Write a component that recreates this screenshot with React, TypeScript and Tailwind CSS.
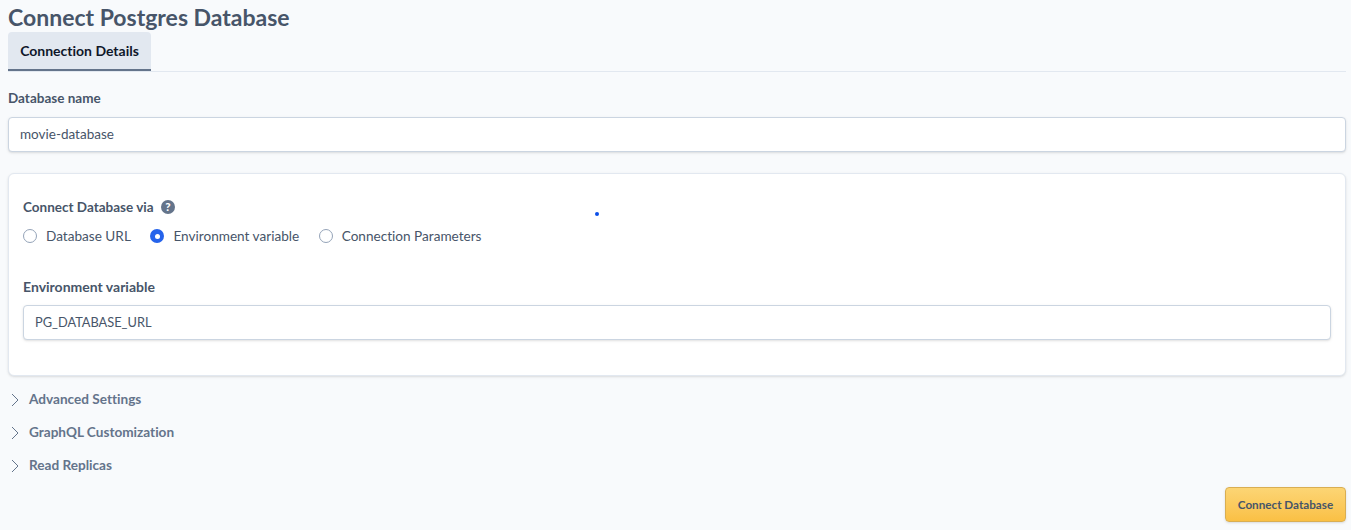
const FONT = "font-['Lato',sans-serif] [font-variant-ligatures:none]";

function Chevron() {
  return (
    <svg width="8" height="14" viewBox="0 0 8 14" fill="none" stroke="#64748b" strokeWidth="1" className="shrink-0">
      <path d="M1 1l6 6-6 6" />
    </svg>
  );
}

function Radio({ label, checked }: { label: string; checked?: boolean }) {
  return (
    <label className="flex items-center gap-[9px]">
      {checked ? (
        <span className="flex h-[14px] w-[14px] items-center justify-center rounded-full bg-[#2563eb]">
          <span className="h-[5px] w-[5px] rounded-full bg-white" />
        </span>
      ) : (
        <span className="h-[14px] w-[14px] rounded-full border border-[#94a3b8] bg-white" />
      )}
      <span className="text-[13.6px] leading-5 text-[#475569]">{label}</span>
    </label>
  );
}

function Collapsed({ label }: { label: string }) {
  return (
    <div className="flex h-[33px] items-center gap-[10px] pl-[3px]">
      <Chevron />
      <span className="text-[13.6px] font-bold text-[#64748b]">{label}</span>
    </div>
  );
}

export default function App() {
  return (
    <div className={`${FONT} relative h-[530px] overflow-hidden bg-[#f8fafc] pl-2 pr-[5px]`}>
      <h1 className="h-8 text-[23px] font-bold leading-[35px] text-[#475569]">Connect Postgres Database</h1>
      <div className="border-b border-[#e2e8f0]">
        <div className="flex h-[39px] w-[143px] items-center justify-center rounded-t border-b-2 border-[#64748b] bg-[#e2e8f0] pt-px text-sm font-bold text-[#0f172a]">
          Connection Details
        </div>
      </div>

      <div className="mt-[16px] text-[13.5px] font-bold leading-5 text-[#475569]">Database name</div>
      <div className="mt-[9px] flex h-[35px] items-center rounded border border-[#cbd5e1] bg-white px-[11px] text-[13.5px] text-[#475569] shadow-sm">
        movie-database
      </div>

      <div className="mt-[21px] h-[203px] rounded-md border border-[#e2e8f0] bg-white px-[14px] pt-[23px] shadow-sm">
        <div className="flex items-center gap-[7px]">
          <span className="text-[13.5px] font-bold leading-5 text-[#475569]">Connect Database via</span>
          <svg width="14" height="14" viewBox="0 0 14 14">
            <circle cx="7" cy="7" r="7" fill="#64748b" />
            <text x="7" y="11" textAnchor="middle" fontSize="11.5" fontWeight="900" fill="#fff">?</text>
          </svg>
        </div>
        <div className="mt-[9px] flex gap-[19.5px]">
          <Radio label="Database URL" />
          <Radio label="Environment variable" checked />
          <Radio label="Connection Parameters" />
        </div>
        <div className="mt-[31px] text-sm font-bold leading-5 text-[#475569]">Environment variable</div>
        <div className="mt-[8px] flex h-[35px] items-center rounded border border-[#cbd5e1] bg-white px-[11px] text-[12.8px] text-[#475569] shadow-sm">
          PG_DATABASE_URL
        </div>
      </div>

      <div className="mt-[7px]">
        <Collapsed label="Advanced Settings" />
        <Collapsed label="GraphQL Customization" />
        <Collapsed label="Read Replicas" />
      </div>

      <div className="mt-[5px] flex justify-end">
        <button className="h-[35px] w-[121px] rounded border border-[#d9ae52] bg-gradient-to-b from-[#fcd574] to-[#fac044] text-[11.7px] font-bold text-[#475569] shadow-sm">
          Connect Database
        </button>
      </div>

      {/* loader dot */}
      <span className="absolute left-[595px] top-[212px] h-[4px] w-[4px] rounded-full bg-[#0b4fe8]" />
    </div>
  );
}
